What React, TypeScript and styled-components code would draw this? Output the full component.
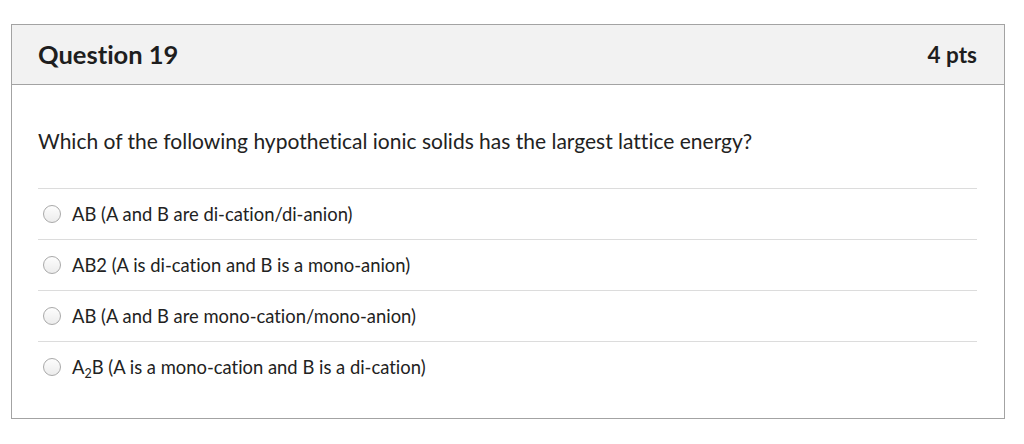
import styled, { createGlobalStyle } from 'styled-components';

const GlobalStyle = createGlobalStyle`
  body {
    margin: 0;
    background: #ffffff;
    font-family: Lato, "Open Sans", sans-serif;
    font-variant-ligatures: none;
    color: #222222;
  }
`;

const Page = styled.div`
  padding: 24px 19px 26px 11px;
`;

const Card = styled.section`
  border: 1px solid #a3a3a3;
  background: #ffffff;
`;

const Header = styled.header`
  height: 59px;
  display: flex;
  align-items: center;
  justify-content: space-between;
  padding: 0 27px 0 26px;
  background: #f2f2f2;
  border-bottom: 1px solid #a3a3a3;
`;

const Title = styled.h2`
  margin: 0 0 1px;
  font-size: 25.5px;
  font-weight: 700;
  color: #1e1e1e;
`;

const Points = styled.span`
  font-size: 22.5px;
  font-weight: 700;
  color: #1e1e1e;
`;

const Body = styled.div`
  padding: 42px 27px 26px 26px;
`;

const QuestionText = styled.p`
  margin: 0 0 33px;
  font-size: 21px;
  line-height: 28px;
`;

const Answers = styled.ul`
  list-style: none;
  margin: 0;
  padding: 0;
`;

const Answer = styled.li`
  height: 50px;
  display: flex;
  align-items: center;
  gap: 11px;
  padding-left: 5px;
  border-top: 1px solid #dcdcdc;
  font-size: 18.4px;
`;

const Radio = styled.span`
  width: 18px;
  height: 18px;
  box-sizing: border-box;
  border-radius: 50%;
  border: 1px solid #a9a9a9;
  background: linear-gradient(#fdfdfd, #ececec);
  flex: none;
`;

const Label = styled.span`
  line-height: 22px;

  sub {
    font-size: 12.5px;
    line-height: 0;
    vertical-align: -4px;
  }
`;

const answers = [
  <>AB (A and B are di-cation/di-anion)</>,
  <>AB2 (A is di-cation and B is a mono-anion)</>,
  <>AB (A and B are mono-cation/mono-anion)</>,
  <>A<sub>2</sub>B (A is a mono-cation and B is a di-cation)</>,
];

export default function App() {
  return (
    <>
      <GlobalStyle />
      <Page>
        <Card>
          <Header>
            <Title>Question 19</Title>
            <Points>4 pts</Points>
          </Header>
          <Body>
            <QuestionText>
              Which of the following hypothetical ionic solids has the largest lattice energy?
            </QuestionText>
            <Answers>
              {answers.map((a, i) => (
                <Answer key={i}>
                  <Radio />
                  <Label>{a}</Label>
                </Answer>
              ))}
            </Answers>
          </Body>
        </Card>
      </Page>
    </>
  );
}
